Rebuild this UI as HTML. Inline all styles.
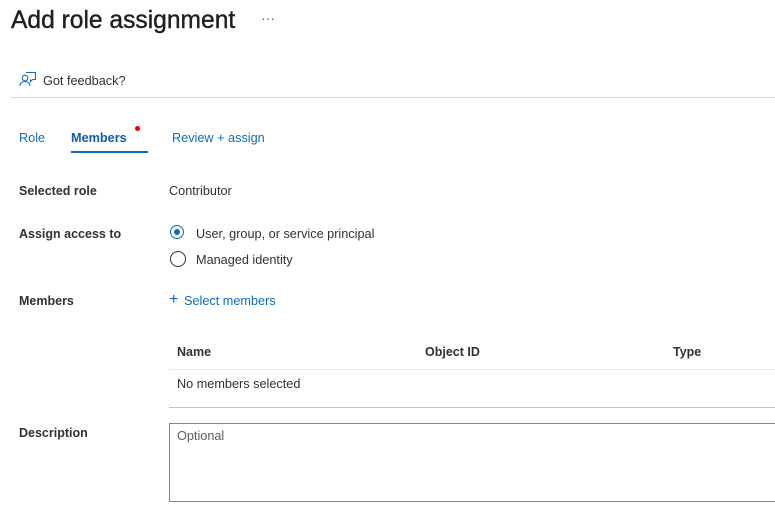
<!DOCTYPE html>
<html><head><style>
body{margin:0;width:775px;height:525px;background:#fff;font-family:"Liberation Sans",sans-serif;color:#323130;position:relative;overflow:hidden}
div,span{position:absolute;white-space:nowrap}
.t{font-size:12.7px}
.b{font-weight:bold;font-size:12.5px;color:#323130}
.blue{color:#0f6cbd}
</style></head><body>
<div style="left:11px;top:7px;font-size:24.6px;color:#201f1e;-webkit-text-stroke:0.4px #201f1e">Add role assignment</div>
<div style="left:261px;top:10px;font-size:14px;color:#605e5c">···</div>
<svg style="position:absolute;left:19px;top:71px" width="18" height="17" viewBox="0 0 18 17" fill="none" stroke="#0f6cbd" stroke-width="1.1"><circle cx="6" cy="7" r="2.8"/><path d="M1 15c0-3 2.3-4.5 5-4.5s5 1.5 5 4.5"/><path d="M7 1.5h9.5v7h-3l-2 2v-2"/></svg>
<div class="t" style="left:43px;top:74px">Got feedback?</div>
<div style="left:11px;top:97px;width:764px;height:1px;background:#d6d6d6"></div>
<div class="t blue" style="left:19px;top:131px">Role</div>
<div class="t blue" style="left:71px;top:131px;font-weight:bold;color:#0f5bb0">Members</div>
<div style="left:135px;top:126px;width:5px;height:5px;border-radius:50%;background:#e00"></div>
<div style="left:71px;top:151px;width:77px;height:2px;background:#0f6cbd"></div>
<div class="t blue" style="left:172px;top:131px">Review + assign</div>
<div class="b" style="left:19px;top:184px">Selected role</div>
<div class="t" style="left:169px;top:184px">Contributor</div>
<div class="b" style="left:19px;top:227px">Assign access to</div>
<div style="left:170px;top:225px;width:14px;height:14px;border:1.3px solid #0f6cbd;border-radius:50%;box-sizing:border-box"></div>
<div style="left:174px;top:229px;width:6px;height:6px;border-radius:50%;background:#0f6cbd"></div>
<div class="t" style="left:196px;top:227px">User, group, or service principal</div>
<div style="left:170px;top:251px;width:16px;height:16px;border:1.3px solid #323130;border-radius:50%;box-sizing:border-box"></div>
<div class="t" style="left:196px;top:253px">Managed identity</div>
<div class="b" style="left:19px;top:294px">Members</div>
<div class="t blue" style="left:169px;top:293px;font-size:16px;line-height:14px;font-weight:300">+</div>
<div class="t blue" style="left:184px;top:294px">Select members</div>
<div class="b" style="left:177px;top:345px">Name</div>
<div class="b" style="left:425px;top:345px">Object ID</div>
<div class="b" style="left:673px;top:345px">Type</div>
<div style="left:169px;top:369px;width:606px;height:1px;background:#edebe9"></div>
<div class="t" style="left:177px;top:377px">No members selected</div>
<div style="left:169px;top:407px;width:606px;height:1px;background:#c8c6c4"></div>
<div class="b" style="left:19px;top:426px">Description</div>
<div style="left:169px;top:423px;width:620px;height:79px;border:1px solid #8a8886;box-sizing:border-box"></div>
<div class="t" style="left:177px;top:429px;color:#605e5c">Optional</div>
</body></html>
